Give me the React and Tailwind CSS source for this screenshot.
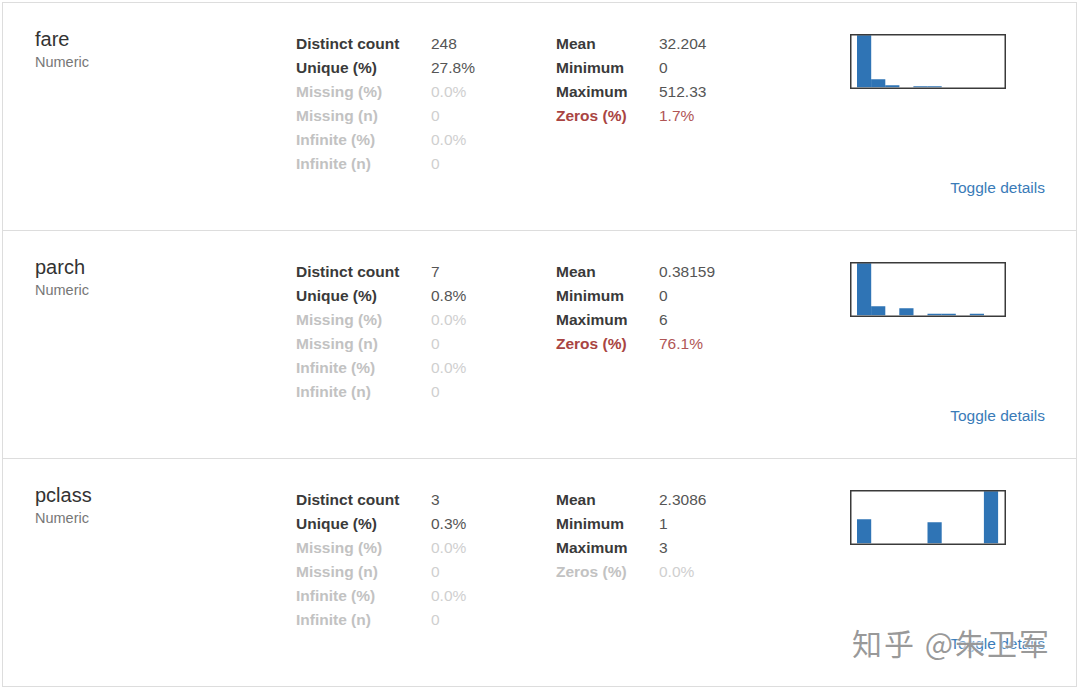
import React from "react";

const rows = [
  {
    name: "fare",
    stats1: [
      ["Distinct count", "248", "dark"],
      ["Unique (%)", "27.8%", "dark"],
      ["Missing (%)", "0.0%", "light"],
      ["Missing (n)", "0", "light"],
      ["Infinite (%)", "0.0%", "light"],
      ["Infinite (n)", "0", "light"],
    ],
    stats2: [
      ["Mean", "32.204", "dark"],
      ["Minimum", "0", "dark"],
      ["Maximum", "512.33", "dark"],
      ["Zeros (%)", "1.7%", "red"],
    ],
    bars: [52, 8, 2, 0, 1, 1, 0, 0, 0, 0],
  },
  {
    name: "parch",
    stats1: [
      ["Distinct count", "7", "dark"],
      ["Unique (%)", "0.8%", "dark"],
      ["Missing (%)", "0.0%", "light"],
      ["Missing (n)", "0", "light"],
      ["Infinite (%)", "0.0%", "light"],
      ["Infinite (n)", "0", "light"],
    ],
    stats2: [
      ["Mean", "0.38159", "dark"],
      ["Minimum", "0", "dark"],
      ["Maximum", "6", "dark"],
      ["Zeros (%)", "76.1%", "red"],
    ],
    bars: [52, 9, 0, 7, 0, 1.5, 1.5, 0, 1.5, 0],
  },
  {
    name: "pclass",
    stats1: [
      ["Distinct count", "3", "dark"],
      ["Unique (%)", "0.3%", "dark"],
      ["Missing (%)", "0.0%", "light"],
      ["Missing (n)", "0", "light"],
      ["Infinite (%)", "0.0%", "light"],
      ["Infinite (n)", "0", "light"],
    ],
    stats2: [
      ["Mean", "2.3086", "dark"],
      ["Minimum", "1", "dark"],
      ["Maximum", "3", "dark"],
      ["Zeros (%)", "0.0%", "light"],
    ],
    bars: [24, 0, 0, 0, 0, 21, 0, 0, 0, 52],
  },
];

const labelCls = {
  dark: "text-[#3a3a3a]",
  light: "text-[#c2c2c2]",
  red: "text-[#a94442]",
};
const valueCls = {
  dark: "text-[#555555]",
  light: "text-[#cfcfcf]",
  red: "text-[#b05555]",
};

function Stats({ items, labelW, width }) {
  return (
    <div className={`${width} mt-[5px] flex flex-col`}>
      {items.map(([l, v, t]) => (
        <div key={l} className="flex h-[24px] items-center">
          <div className={`${labelW} font-bold ${labelCls[t]}`}>{l}</div>
          <div className={valueCls[t]}>{v}</div>
        </div>
      ))}
    </div>
  );
}

function Histogram({ bars }) {
  const bottom = 53.25;
  return (
    <svg width="156" height="55" viewBox="0 0 156 55" className="mt-[7px] block">
      {bars.map((h, i) =>
        h > 0 ? (
          <rect
            key={i}
            x={7 + i * 14.1}
            y={bottom - h}
            width={14.2}
            height={h}
            fill="#2f74b5"
          />
        ) : null
      )}
      <rect x="0.75" y="0.75" width="154.5" height="53.5" fill="none" stroke="#3a3a3a" strokeWidth="1.5" />
    </svg>
  );
}

export default function App() {
  return (
    <div
      className="relative bg-white w-[1080px] h-[689px] pt-[2px] pl-[2px] text-[15.5px] leading-[24px]"
      style={{ fontFamily: '"Liberation Sans", Arial, sans-serif' }}
    >
      <div className="w-[1075px]">
        {rows.map((r, idx) => (
          <div
            key={r.name}
            className={`flex flex-col border-x border-b border-[#dddddd] ${idx === 0 ? "border-t h-[229px]" : "h-[228px]"}`}
          >
            <div className="flex items-start pt-[24px] pl-[32px]">
              <div className="w-[261px] flex flex-col">
                <div className="text-[20px] leading-[24px] text-[#333333]">{r.name}</div>
                <div className="text-[14.5px] leading-[22px] text-[#777777]">Numeric</div>
              </div>
              <Stats items={r.stats1} labelW="w-[135px]" width="w-[260px]" />
              <Stats items={r.stats2} labelW="w-[103px]" width="w-[294px]" />
              <Histogram bars={r.bars} />
            </div>
            <div className="mt-auto pb-[30px] pr-[31px] text-right">
              <span className="text-[#3a7bb8]">Toggle details</span>
            </div>
          </div>
        ))}
      </div>
      <div
        className="absolute left-[852px] top-[624px] text-[30px] leading-[36px] text-[rgba(120,120,120,0.75)] tracking-[2px] [text-shadow:0_0_2px_#ffffff,0_0_3px_#ffffff]"
        style={{ fontFamily: '"Noto Sans CJK SC", "Liberation Sans", sans-serif' }}
      >
        知乎 @朱卫军
      </div>
    </div>
  );
}
